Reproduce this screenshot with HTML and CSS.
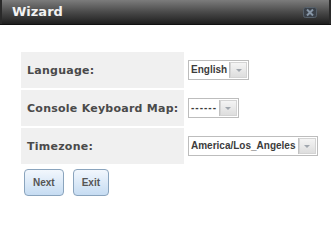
FILE: index.html
```html
<!DOCTYPE html>
<html>
<head>
<meta charset="utf-8">
<link rel="stylesheet" href="styles.css">
</head>
<body>
<div class="dialog">
  <div class="titlebar">
    <span class="title">Wizard</span>
    <span class="close">
      <svg width="14" height="11" viewBox="0 0 14 11">
        <rect x="0.5" y="0.5" width="13" height="10" rx="2" fill="#3a4048" stroke="#56606a"/>
        <path d="M4 2.5 L10 8.5 M10 2.5 L4 8.5" stroke="#8796a6" stroke-width="2"/>
      </svg>
    </span>
  </div>
  <div class="content">
    <div class="form">
      <div class="label">Language:</div>
      <div class="value">
        <div class="select"><span class="text">English</span><span class="arrow"><i></i></span></div>
      </div>
      <div class="label">Console Keyboard Map:</div>
      <div class="value">
        <div class="select"><span class="text dashes">------</span><span class="arrow"><i></i></span></div>
      </div>
      <div class="label">Timezone:</div>
      <div class="value">
        <div class="select"><span class="text">America/Los_Angeles</span><span class="arrow"><i></i></span></div>
      </div>
    </div>
    <div class="buttons">
      <button class="btn">Next</button>
      <button class="btn">Exit</button>
    </div>
  </div>
</div>
</body>
</html>
```

FILE: styles.css
```css
html, body {
  margin: 0;
  padding: 0;
  background: #ffffff;
}

.dialog {
  width: 331px;
  height: 212px;
  background: #ffffff;
}

.titlebar {
  height: 24px;
  border-bottom: 1px solid #111111;
  background: linear-gradient(#7c7c7c, #4a4a4a 50%, #1e1e1e);
  box-shadow: inset 2px 0 0 #2a2a2a, inset -2px 0 0 #2a2a2a;
  display: flex;
  align-items: center;
  justify-content: space-between;
  padding: 0 14px 0 12px;
}

.title {
  font-family: "DejaVu Sans", Verdana, sans-serif;
  font-weight: bold;
  font-size: 13px;
  color: #f2f2f2;
  line-height: 24px;
}

.close {
  display: flex;
  margin-top: 1px;
}

.content {
  padding: 27px 0 0 21px;
}

.form {
  display: grid;
  grid-template-columns: 163px auto;
  grid-auto-rows: 36px;
  gap: 2px;
}

.label {
  background: #f0f0f0;
  display: flex;
  align-items: center;
  padding-left: 6px;
  font-family: "DejaVu Sans", Verdana, sans-serif;
  font-weight: bold;
  font-size: 11px;
  letter-spacing: 0.25px;
  color: #4a4a4a;
}

.value {
  display: flex;
  align-items: center;
  padding-left: 2px;
}

.select {
  display: inline-flex;
  height: 18px;
  border: 1px solid #bdbdbd;
  background: #ffffff;
}

.text {
  font-family: "Liberation Sans", Arial, sans-serif;
  font-weight: bold;
  font-size: 10px;
  line-height: 18px;
  color: #3c3c3c;
  padding: 0 2px 0 2px;
}

.dashes {
  letter-spacing: 1px;
}

.arrow {
  width: 17px;
  height: 16px;
  border-left: 1px solid #c2c2c2;
  box-shadow: inset 0 0 0 1px #d4d4d4;
  margin: 1px 1px 1px 0;
  background: linear-gradient(#f6f6f6, #dcdcdc);
  display: flex;
  align-items: center;
  justify-content: center;
}

.arrow i {
  width: 0;
  height: 0;
  border-left: 3px solid transparent;
  border-right: 3px solid transparent;
  border-top: 3px solid #a0a6ad;
}

.buttons {
  display: flex;
  gap: 9px;
  padding: 5px 0 0 3px;
}

.btn {
  height: 27px;
  margin: 0;
  padding: 0 8px;
  border: 1px solid #8aa4bd;
  border-radius: 4px;
  background: linear-gradient(#f2f7fd, #c6dcf2);
  font-family: "Liberation Sans", Arial, sans-serif;
  font-weight: bold;
  font-size: 10px;
  color: #555555;
}
```
